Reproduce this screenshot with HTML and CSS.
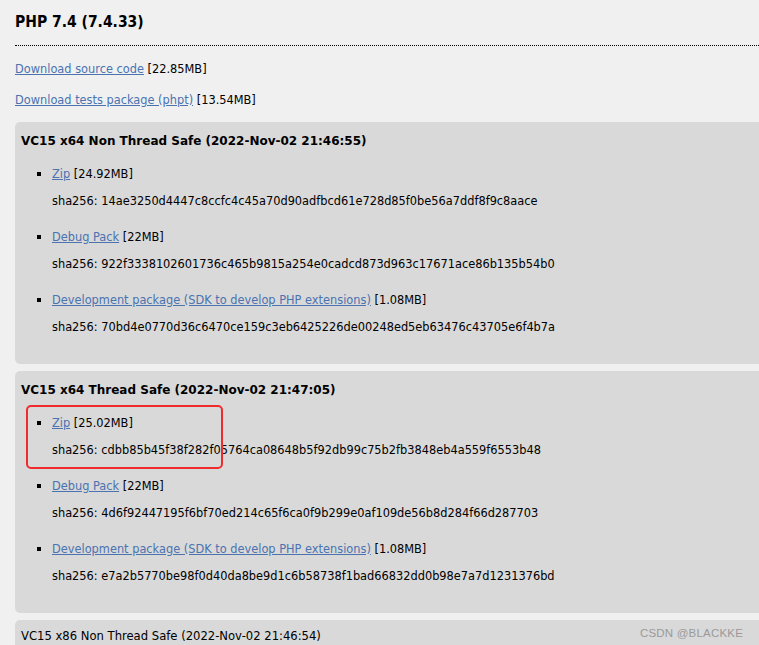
FILE: index.html
```html
<!DOCTYPE html>
<html>
<head>
<meta charset="utf-8">
<link rel="stylesheet" href="styles.css">
</head>
<body>
<div class="page">
  <h3 class="title">PHP 7.4 (7.4.33)</h3>
  <div class="rule"></div>
  <p class="dl"><a href="#">Download source code</a> [22.85MB]</p>
  <p class="dl"><a href="#">Download tests package (phpt)</a> [13.54MB]</p>

  <div class="entry">
    <h4 class="entry-title">VC15 x64 Non Thread Safe (2022-Nov-02 21:46:55)</h4>
    <ul class="files">
      <li class="file"><div class="name"><a href="#">Zip</a> [24.92MB]</div><div class="sum">sha256: 14ae3250d4447c8ccfc4c45a70d90adfbcd61e728d85f0be56a7ddf8f9c8aace</div></li>
      <li class="file"><div class="name"><a href="#">Debug Pack</a> [22MB]</div><div class="sum">sha256: 922f3338102601736c465b9815a254e0cadcd873d963c17671ace86b135b54b0</div></li>
      <li class="file"><div class="name"><a href="#">Development package (SDK to develop PHP extensions)</a> [1.08MB]</div><div class="sum">sha256: 70bd4e0770d36c6470ce159c3eb6425226de00248ed5eb63476c43705e6f4b7a</div></li>
    </ul>
  </div>

  <div class="entry">
    <h4 class="entry-title">VC15 x64 Thread Safe (2022-Nov-02 21:47:05)</h4>
    <ul class="files">
      <li class="file highlighted"><div class="name"><a href="#">Zip</a> [25.02MB]</div><div class="sum">sha256: cdbb85b45f38f282f05764ca08648b5f92db99c75b2fb3848eb4a559f6553b48</div><span class="mark"></span></li>
      <li class="file"><div class="name"><a href="#">Debug Pack</a> [22MB]</div><div class="sum">sha256: 4d6f92447195f6bf70ed214c65f6ca0f9b299e0af109de56b8d284f66d287703</div></li>
      <li class="file"><div class="name"><a href="#">Development package (SDK to develop PHP extensions)</a> [1.08MB]</div><div class="sum">sha256: e7a2b5770be98f0d40da8be9d1c6b58738f1bad66832dd0b98e7a7d1231376bd</div></li>
    </ul>
  </div>

  <div class="entry last">
    <h4 class="entry-title plain">VC15 x86 Non Thread Safe (2022-Nov-02 21:46:54)</h4>
  </div>
</div>
<div class="watermark">CSDN @BLACKKE</div>
</body>
</html>
```
FILE: styles.css
```css
html, body {
  margin: 0;
  padding: 0;
  background: #f0f0f0;
  overflow: hidden;
  height: 645px;
}
body {
  font-family: "DejaVu Sans Condensed", "DejaVu Sans", sans-serif;
  font-size: 12.65px;
  color: #000;
  position: relative;
}
.page {
  padding-left: 15px;
  width: 800px;
}
.title {
  margin: 0;
  padding-top: 10px;
  font-size: 15.5px;
  line-height: 24px;
  font-weight: bold;
}
.rule {
  margin-top: 11px;
  border-top: 1px dotted #000;
  height: 0;
}
.dl {
  margin: 13px 0 0;
  line-height: 20px;
}
.dl + .dl {
  margin-top: 11px;
}
a {
  color: #4a73b0;
  text-decoration: underline;
}
.entry {
  margin-top: 12px;
  background: #d9d9d9;
  border-radius: 5px;
  padding: 9px 0 27px 6px;
}
.entry + .entry {
  margin-top: 7px;
}
.entry-title {
  margin: 0;
  font-family: "DejaVu Sans", sans-serif;
  font-size: 12px;
  line-height: 20px;
  font-weight: bold;
}
.entry-title.plain {
  font-family: "DejaVu Sans Condensed", "DejaVu Sans", sans-serif;
  font-size: 12.9px;
  font-weight: normal;
}
.entry.last {
  padding-top: 6px;
}
.files {
  margin: 13px 0 0;
  padding: 0 0 0 31px;
  list-style: square;
}
.file {
  line-height: 20px;
  position: relative;
}
.file + .file {
  margin-top: 16px;
}
.sum {
  margin-top: 7px;
}
.mark {
  position: absolute;
  left: -26px;
  top: -8px;
  width: 193px;
  height: 60px;
  border: 2px solid #f02b2b;
  border-radius: 5px;
}
.watermark {
  position: absolute;
  right: 16px;
  bottom: 6px;
  font-family: "Liberation Sans", Arial, sans-serif;
  font-size: 11.5px;
  color: #9a9a9a;
  letter-spacing: 0.2px;
}
```
